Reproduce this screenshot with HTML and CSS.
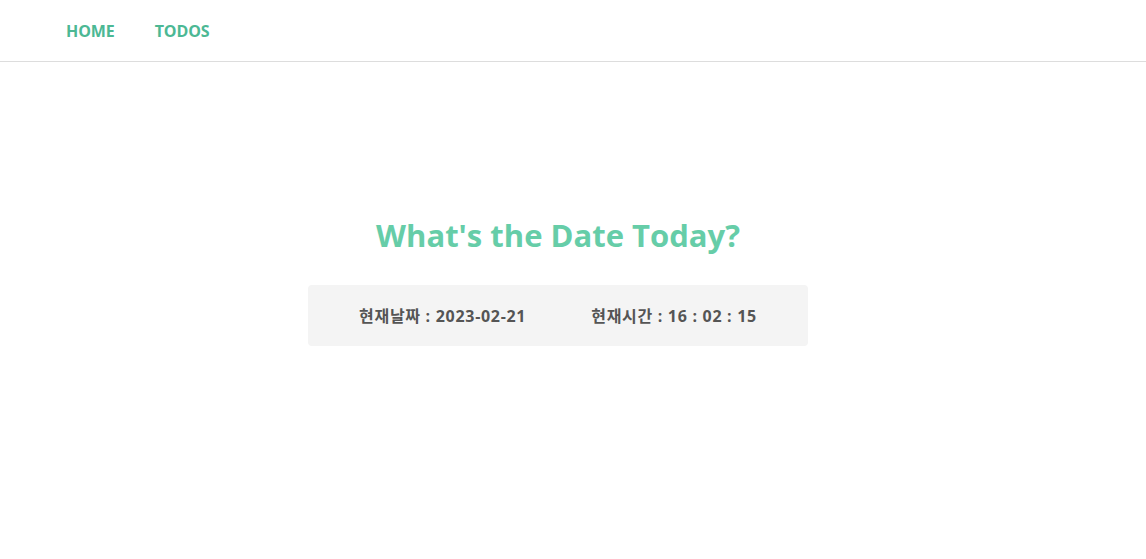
FILE: index.html
```html
<!DOCTYPE html>
<html lang="ko">
<head>
<meta charset="utf-8">
<title>What's the Date Today?</title>
<link rel="stylesheet" href="styles.css">
</head>
<body>
<nav class="nav">
  <a class="nav-link" href="#">HOME</a>
  <a class="nav-link" href="#">TODOS</a>
</nav>
<main class="main">
  <h1 class="title">What's the Date Today?</h1>
  <div class="clock">
    <span class="clock-item">현재날짜 : 2023-02-21</span>
    <span class="clock-item">현재시간 : 16 : 02 : 15</span>
  </div>
</main>
</body>
</html>
```

FILE: styles.css
```css
html, body {
  margin: 0;
  padding: 0;
  background: #fff;
  font-family: "Open Sans", "Noto Sans CJK KR", sans-serif;
}
.nav {
  height: 61px;
  border-bottom: 1px solid #dddddd;
  display: flex;
  align-items: center;
  gap: 40px;
  padding-left: 66px;
  box-sizing: content-box;
}
.nav-link {
  color: #4cb894;
  font-weight: 700;
  font-size: 16px;
  text-decoration: none;
  letter-spacing: -0.1px;
}
.main {
  display: flex;
  flex-direction: column;
  align-items: center;
  margin-right: 30px;
  padding-top: 152px;
}
.title {
  margin: 0;
  color: #66cda8;
  font-size: 31px;
  font-weight: 700;
  line-height: 42px;
}
.clock {
  margin-top: 29px;
  width: 500px;
  height: 61px;
  box-sizing: border-box;
  padding-bottom: 2px;
  background: #f4f4f4;
  border-radius: 4px;
  display: flex;
  align-items: center;
  justify-content: center;
  gap: 65px;
}
.clock-item {
  color: #555555;
  font-size: 16px;
  font-weight: 700;
  letter-spacing: 0.7px;
}
```
